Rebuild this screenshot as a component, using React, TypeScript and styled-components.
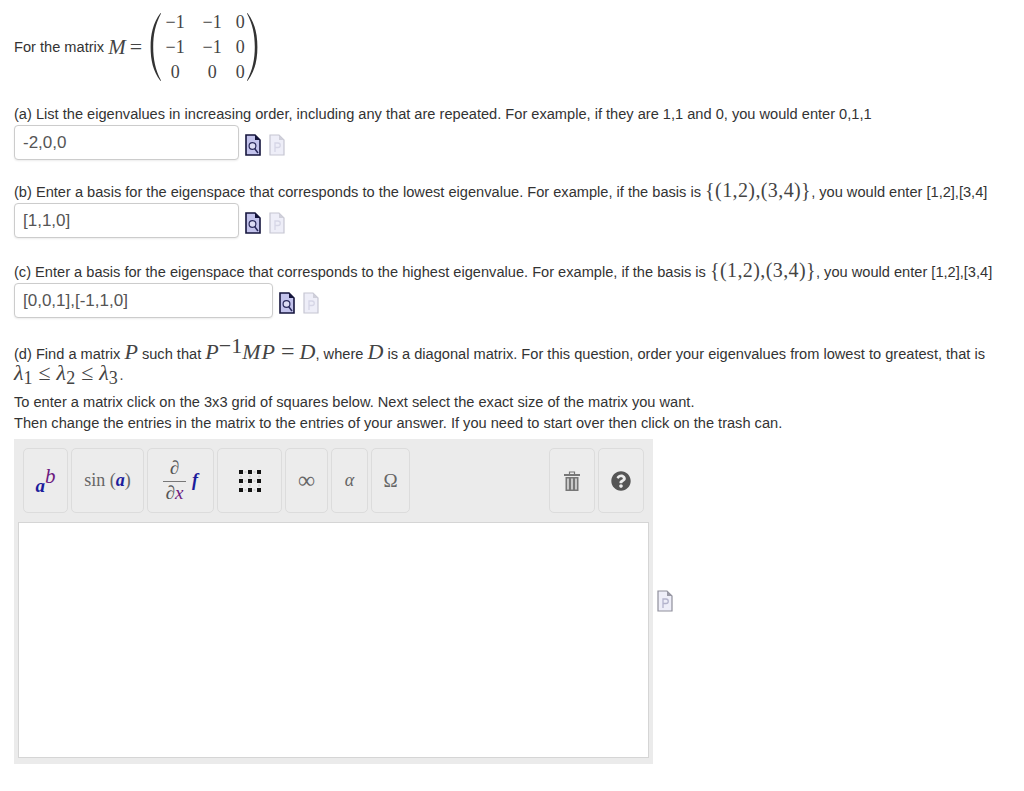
import React from 'react';
import styled, { createGlobalStyle } from 'styled-components';
import { FaQuestionCircle } from 'react-icons/fa';

const Global = createGlobalStyle`
  html, body { margin: 0; padding: 0; background: #fff; }
  body {
    font-family: "Liberation Sans", Arial, sans-serif;
    font-size: 14.62px;
    color: #333;
  }
`;

const Page = styled.div`
  padding: 12px 14px 0;
  width: 1010px;
  box-sizing: border-box;
  height: 791px;
  overflow: hidden;
`;

const Intro = styled.div`
  display: flex;
  align-items: center;
  height: 70px;
  margin-bottom: 22px;
`;

const M = styled.span<{ $size?: number }>`
  font-family: "Liberation Serif", "Times New Roman", serif;
  font-style: italic;
  font-size: ${({ $size }) => $size ?? 22}px;
  line-height: 0;
  color: #444;
`;

const Spaced = styled(M)`
  letter-spacing: 1px;
`;

const R = styled.span<{ $size?: number }>`
  font-family: "Liberation Serif", "Times New Roman", serif;
  font-size: ${({ $size }) => $size ?? 20}px;
  line-height: 0;
  color: #444;
`;

const Rel = styled(R)<{ $gap?: number }>`
  margin: 0 ${({ $gap }) => $gap ?? 6}px;
`;

const Set = styled(R)`
  letter-spacing: 0.4px;
`;

const Sup = styled.span`
  font-family: "Liberation Serif", "Times New Roman", serif;
  font-size: 22px;
  line-height: 0;
  vertical-align: 6px;
  color: #444;
`;

const Sub = styled.span`
  font-family: "Liberation Serif", "Times New Roman", serif;
  font-size: 18px;
  line-height: 0;
  vertical-align: -4px;
  color: #444;
`;

const MatrixWrap = styled.div`
  display: flex;
  align-items: center;
  margin-left: 6px;
`;

const MatrixGrid = styled.div`
  display: grid;
  grid-template-columns: 26px 24px 8px;
  column-gap: 12px;
  grid-auto-rows: 25px;
  margin: 0 2px 0 0;
  justify-items: center;
  align-items: center;
  font-family: "Liberation Serif", "Times New Roman", serif;
  font-size: 18px;
  color: #444;
`;

const Para = styled.div`
  height: 21px;
  line-height: 21px;
  white-space: nowrap;
`;

const Gap = styled.div<{ $h: number }>`
  height: ${({ $h }) => $h}px;
`;

const AnswerRow = styled.div`
  display: flex;
  align-items: center;
`;

const Answer = styled.input<{ $w: number }>`
  width: ${({ $w }) => $w}px;
  height: 35px;
  box-sizing: border-box;
  border: 1px solid #ccc;
  border-radius: 4px;
  padding: 0 8px;
  margin: 0;
  font-family: "Liberation Sans", Arial, sans-serif;
  font-size: 17px;
  color: #555;
  box-shadow: 0 1px 2px rgba(0, 0, 0, 0.08);
  outline: none;
  background: #fff;
`;

const Icons = styled.div`
  display: flex;
  gap: 8px;
  margin-left: 6px;
  align-items: center;
  padding-top: 4px;
`;

const MathEditor = styled.div`
  width: 639px;
  height: 325px;
  background: #ebebeb;
  margin-top: 5px;
  box-sizing: border-box;
  padding: 9px 4px 6px;
  display: flex;
  flex-direction: column;
`;

const Toolbar = styled.div`
  display: flex;
  justify-content: space-between;
  padding: 0 5px;
  height: 65px;
  margin-bottom: 9px;
`;

const ToolGroup = styled.div`
  display: flex;
  gap: 3px;
`;

const ToolButton = styled.div<{ $w: number; $font?: number }>`
  width: ${({ $w }) => $w}px;
  height: 65px;
  box-sizing: border-box;
  border: 1px solid #dcdcdc;
  border-radius: 5px;
  background: #ececec;
  display: flex;
  align-items: center;
  justify-content: center;
  font-family: "Liberation Serif", "Times New Roman", serif;
  color: #666;
  font-size: ${({ $font }) => $font ?? 18}px;
`;

const Blue = styled.i`
  color: #1c1c9c;
  font-weight: bold;
`;

const Purple = styled.i`
  color: #6c1a80;
`;

const BaseA = styled(Blue)`
  font-size: 19px;
  position: relative;
  top: 5px;
`;

const ExpB = styled(Purple)`
  font-size: 21px;
  position: relative;
  top: -4px;
`;

const Frac = styled.div`
  display: flex;
  flex-direction: column;
  align-items: center;
  font-size: 19px;
  line-height: 20px;
  margin-right: 6px;
  color: #555;
`;

const FracTop = styled.span`
  border-bottom: 1px solid #777;
  width: 23px;
  text-align: center;
  padding-bottom: 3px;
`;

const FracBottom = styled.span`
  padding-top: 1px;
`;

const Editable = styled.div`
  flex: 1;
  background: #fff;
  border: 1px solid #d5d5d5;
`;

const EditorRow = styled.div`
  display: flex;
  align-items: center;
`;

const SideIcon = styled.div`
  margin-left: 4px;
  margin-top: 6px;
`;

const Paren = ({ flip }: { flip?: boolean }) => (
  <svg width="14" height="70" viewBox="0 0 14 70" style={flip ? { transform: 'scaleX(-1)' } : undefined}>
    <path d="M12.5 1 C5 11 2.6 22 2.6 35 C2.6 48 5 59 12.5 69 L13 68.4 C7.4 58 5.2 47 5.2 35 C5.2 23 7.4 12 13 1.6 Z" fill="#333" />
  </svg>
);

const ViewIcon = () => (
  <svg width="16" height="22" viewBox="0 0 16 22">
    <path d="M1 1 H10 L15 6 V21 H1 Z" fill="#c3c3ec" stroke="#15153c" strokeWidth="1.6" />
    <path d="M10 1 V6 H15 Z" fill="#15153c" />
    <circle cx="7.5" cy="12" r="3.4" fill="#dcdcf4" stroke="#2a2a5c" strokeWidth="1.2" />
    <path d="M9.8 14.8 L13 19" stroke="#2a2a5c" strokeWidth="1.5" />
  </svg>
);

const PreviewIcon = ({ dark }: { dark?: boolean }) => (
  <svg width="16" height="22" viewBox="0 0 16 22">
    <path d="M1 1 H10 L15 6 V21 H1 Z" fill="#eeeef8" stroke={dark ? '#8f8f9c' : '#c6c6d2'} strokeWidth="1.2" />
    <path d="M10 1 V6 H15 Z" fill={dark ? '#9a9aa6' : '#cfcfda'} />
    <path d="M6 18 V9 H9 A2.2 2.2 0 0 1 9 13.5 H6" fill="none" stroke={dark ? '#b4b4cc' : '#d6d6e6'} strokeWidth="1.3" />
  </svg>
);

const GridIcon = () => (
  <svg width="26" height="26" viewBox="0 0 26 26">
    {[2, 11, 20].map(y => [2, 11, 20].map(x => (
      <rect key={`${x}-${y}`} x={x} y={y} width="4" height="4" fill="#111" />
    )))}
    {[4, 13, 22].map(y => [7.5, 16.5].map(x => (
      <rect key={`h${x}-${y}`} x={x} y={y - 0.5} width="2" height="1" fill="#bbb" />
    )))}
    {[7.5, 16.5].map(y => [3.5, 12.5, 21.5].map(x => (
      <rect key={`v${x}-${y}`} x={x} y={y} width="1" height="2" fill="#bbb" />
    )))}
  </svg>
);

const TrashIcon = () => (
  <svg width="16" height="20" viewBox="0 0 16 20">
    <path d="M0 3 H16 V5 H0 Z" fill="#777" />
    <path d="M5.5 3 V1 H10.5 V3" fill="none" stroke="#777" strokeWidth="1.2" />
    <path d="M1.5 6 H14.5 V20 H1.5 Z" fill="#777" />
    <path d="M4 7.5 V18.5 M8 7.5 V18.5 M12 7.5 V18.5" stroke="#ececec" strokeWidth="1.4" />
  </svg>
);

const matrix = ['\u22121', '\u22121', '0', '\u22121', '\u22121', '0', '0', '0', '0'];

const Basis = () => <Set>{'{(1,2),(3,4)}'}</Set>;

export default function App() {
  return (
    <Page>
      <Global />
      <Intro>
        For the matrix&nbsp;<M $size={21}>M</M>&nbsp;<R $size={22}>=</R>
        <MatrixWrap>
          <Paren />
          <MatrixGrid>
            {matrix.map((v, i) => <span key={i}>{v}</span>)}
          </MatrixGrid>
          <Paren flip />
        </MatrixWrap>
      </Intro>

      <Para>(a) List the eigenvalues in increasing order, including any that are repeated. For example, if they are 1,1 and 0, you would enter 0,1,1</Para>
      <AnswerRow>
        <Answer $w={225} defaultValue="-2,0,0" />
        <Icons><ViewIcon /><PreviewIcon /></Icons>
      </AnswerRow>
      <Gap $h={22} />

      <Para>(b) Enter a basis for the eigenspace that corresponds to the lowest eigenvalue. For example, if the basis is <Basis />, you would enter [1,2],[3,4]</Para>
      <AnswerRow>
        <Answer $w={225} defaultValue="[1,1,0]" />
        <Icons><ViewIcon /><PreviewIcon /></Icons>
      </AnswerRow>
      <Gap $h={24} />

      <Para>(c) Enter a basis for the eigenspace that corresponds to the highest eigenvalue. For example, if the basis is <Basis />, you would enter [1,2],[3,4]</Para>
      <AnswerRow>
        <Answer $w={259} defaultValue="[0,0,1],[-1,1,0]" />
        <Icons><ViewIcon /><PreviewIcon /></Icons>
      </AnswerRow>
      <Gap $h={26} />

      <Para>(d) Find a matrix <M>P</M> such that <M>P</M><Sup>{'\u22121'}</Sup><Spaced>MP</Spaced> <Rel $size={24} $gap={1}>=</Rel> <M>D</M>, where <M>D</M> is a diagonal matrix. For this question, order your eigenvalues from lowest to greatest, that is</Para>
      <Para><M>λ</M><Sub>1</Sub><Rel $size={22}>≤</Rel><M>λ</M><Sub>2</Sub><Rel $size={22}>≤</Rel><M>λ</M><Sub>3</Sub><Rel $size={14} $gap={2}>.</Rel></Para>
      <Gap $h={6} />
      <Para>To enter a matrix click on the 3x3 grid of squares below. Next select the exact size of the matrix you want.</Para>
      <Para>Then change the entries in the matrix to the entries of your answer. If you need to start over then click on the trash can.</Para>

      <EditorRow>
        <MathEditor>
          <Toolbar>
            <ToolGroup>
              <ToolButton $w={45}><BaseA>a</BaseA><ExpB>b</ExpB></ToolButton>
              <ToolButton $w={73}>sin&nbsp;(<Blue>a</Blue>)</ToolButton>
              <ToolButton $w={67}>
                <Frac>
                  <FracTop>∂</FracTop>
                  <FracBottom>∂<Purple>x</Purple></FracBottom>
                </Frac>
                <Blue>f</Blue>
              </ToolButton>
              <ToolButton $w={65}><GridIcon /></ToolButton>
              <ToolButton $w={43} $font={24}>∞</ToolButton>
              <ToolButton $w={37}><i>α</i></ToolButton>
              <ToolButton $w={39} $font={19}>Ω</ToolButton>
            </ToolGroup>
            <ToolGroup>
              <ToolButton $w={46}><TrashIcon /></ToolButton>
              <ToolButton $w={46}><FaQuestionCircle size={20} color="#555" /></ToolButton>
            </ToolGroup>
          </Toolbar>
          <Editable />
        </MathEditor>
        <SideIcon><PreviewIcon dark /></SideIcon>
      </EditorRow>
    </Page>
  );
}
